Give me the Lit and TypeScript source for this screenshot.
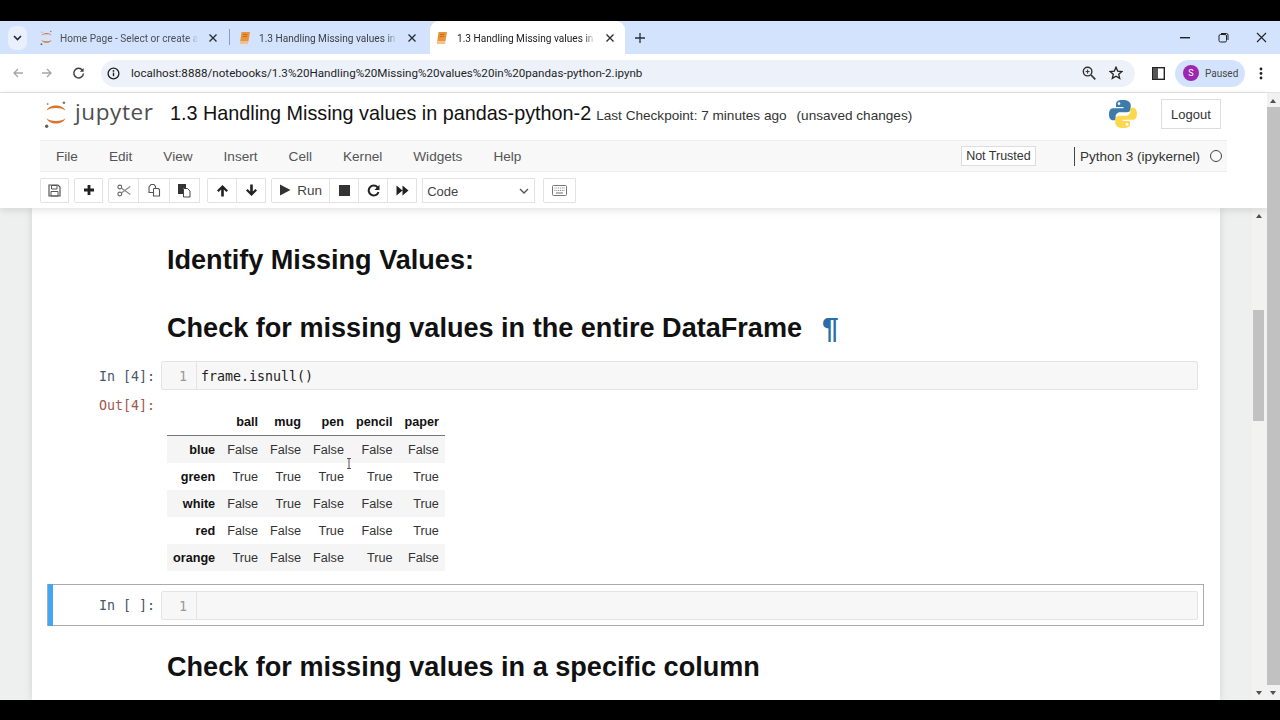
import { LitElement, html, css, svg } from "lit";
import { customElement } from "lit/decorators.js";

const book = svg`<svg width="14" height="14" viewBox="0 0 14 14"><path d="M3.5 1h8.5l-1.6 9.5H2.2z" fill="#e8953a"/><path d="M2.2 10.5h8.2l-.5 2.5H2.6c-1 0-1.3-1.2-.4-2.5z" fill="#f6c08a"/><path d="M5 3.5h4.5M4.7 5.5h4.5" stroke="#b8661a" stroke-width=".8"/></svg>`;
const jup = (s: number) => svg`<svg width="${s}" height="${s * 1.2}" viewBox="0 0 24 29"><path d="M2.5 10.5C5 3.8 19 3.8 21.5 10.5 18 7.2 6 7.2 2.5 10.5z" fill="#d8752e"/><path d="M2.5 18.5C5 25.5 19 25.5 21.5 18.5 18 22 6 22 2.5 18.5z" fill="#d8752e"/><circle cx="20" cy="2.8" r="1.3" fill="#767677"/><circle cx="2.6" cy="26.4" r="1.7" fill="#616262"/><circle cx="3.6" cy="4" r="1" fill="#989798"/></svg>`;
const x = svg`<svg width="10" height="10" viewBox="0 0 10 10"><path d="M1.5 1.5l7 7M8.5 1.5l-7 7" stroke="#2b2f36" stroke-width="1.4"/></svg>`;
const python = svg`<svg width="30" height="30" viewBox="0 0 30 30"><path d="M14.8 1C9 1 8 3 8 5.5V8h7.5v1.2H5C2.2 9.2 1 12 1 15.3c0 3.6 1.3 6 4 6h2.6v-3.5c0-2.6 2.1-4.6 4.8-4.6h6.6c2.2 0 3.7-1.7 3.7-3.8V5.5C22.2 2.8 20 1 14.8 1z" fill="#3d7bab"/><circle cx="11" cy="4.6" r="1.3" fill="#fff"/><path d="M15.2 29c5.8 0 6.8-2 6.8-4.5V22h-7.5v-1.2H25c2.8 0 4-2.8 4-6.1 0-3.6-1.3-6-4-6h-2.6v3.5c0 2.6-2.1 4.6-4.8 4.6H11c-2.2 0-3.7 1.7-3.7 3.8v3.9C7.8 27.2 10 29 15.2 29z" fill="#fcd84f"/><circle cx="19" cy="25.4" r="1.3" fill="#fff"/></svg>`;

const ic = {
  save: svg`<svg width="13" height="13" viewBox="0 0 13 13"><path d="M1 1h9l2 2v9H1z" fill="none" stroke="#555" stroke-width="1.2"/><path d="M3.5 1.5h5.5v3.5H3.5zM3 7.5h7v4.5H3z" fill="none" stroke="#555"/></svg>`,
  plus: svg`<svg width="12" height="12" viewBox="0 0 12 12"><path d="M6 1v10M1 6h10" stroke="#222" stroke-width="2.8"/></svg>`,
  cut: svg`<svg width="14" height="13" viewBox="0 0 14 13"><circle cx="2.8" cy="3" r="1.9" fill="none" stroke="#666" stroke-width="1.1"/><circle cx="2.8" cy="10" r="1.9" fill="none" stroke="#666" stroke-width="1.1"/><path d="M4.3 4l9 6.5M4.3 9l9-6.5" stroke="#888" stroke-width="1.1"/></svg>`,
  copy: svg`<svg width="14" height="14" viewBox="0 0 14 14"><path d="M4 1.5h3l1.5 2v2H11.5l1 1.2V13h-6V9.5H2V4z" fill="none" stroke="#555" stroke-width="1.1"/><path d="M6.5 9.5V5.5h2" fill="none" stroke="#555"/></svg>`,
  paste: svg`<svg width="14" height="15" viewBox="0 0 14 15"><path d="M1 1h8v4H6v6H1z" fill="#333"/><path d="M6.5 5.5h4l2.5 2.5v6H6.5z" fill="#fff" stroke="#444"/></svg>`,
  up: svg`<svg width="13" height="13" viewBox="0 0 13 13"><path d="M6.5 1L12 6.6l-1.6 1.5-2.6-2.6V12.5H5.2V5.5L2.6 8.1 1 6.6z" fill="#222"/></svg>`,
  down: svg`<svg width="13" height="13" viewBox="0 0 13 13"><path d="M6.5 12L12 6.4l-1.6-1.5-2.6 2.6V.5H5.2v7L2.6 4.9 1 6.4z" fill="#222"/></svg>`,
  play: svg`<svg width="12" height="12" viewBox="0 0 12 12"><path d="M1 .5L11.5 6 1 11.5z" fill="#333"/></svg>`,
  stop: svg`<svg width="11" height="11" viewBox="0 0 11 11"><rect width="11" height="11" fill="#333"/></svg>`,
  restart: svg`<svg width="13" height="13" viewBox="0 0 13 13"><path d="M10.6 3.4A5 5 0 1 0 11.5 8" fill="none" stroke="#222" stroke-width="2"/><path d="M12.5 .8V6H7.5z" fill="#222"/></svg>`,
  ff: svg`<svg width="13" height="11" viewBox="0 0 13 11"><path d="M.5 .5L6.5 5.5.5 10.5zM6.5 .5L12.5 5.5 6.5 10.5z" fill="#222"/></svg>`,
  kb: svg`<svg width="15" height="11" viewBox="0 0 15 11"><rect x=".5" y=".5" width="14" height="10" rx="1" fill="none" stroke="#777"/><path d="M2.5 3h10M2.5 5.5h10" stroke="#888" stroke-width="1.2" stroke-dasharray="1 .8"/><path d="M4 8h7" stroke="#888" stroke-width="1.2"/></svg>`,
};

const cols = ["ball", "mug", "pen", "pencil", "paper"];
const rows: [string, string[]][] = [
  ["blue", ["False", "False", "False", "False", "False"]],
  ["green", ["True", "True", "True", "True", "True"]],
  ["white", ["False", "True", "False", "False", "True"]],
  ["red", ["False", "False", "True", "False", "True"]],
  ["orange", ["True", "False", "False", "True", "False"]],
];

@customElement("app-root")
export class AppRoot extends LitElement {
  static styles = css`
    :host { display: flex; flex-direction: column; width: 1280px; height: 720px; background: #000; overflow: hidden; font-family: "Liberation Sans", Arial, sans-serif; color: #333; }
    .blackt { height: 21px; flex: none; background: #000; }
    .blackb { height: 20px; flex: none; background: #000; }
    .tabs { height: 33px; flex: none; background: #d3e3fd; display: flex; align-items: flex-end; font-family: Roboto, sans-serif; font-size: 10.1px; color: #3c4043; position: relative; }
    .chev { width: 19px; height: 24px; margin: 0 0 4px 8px; background: #e9f0fc; border-radius: 8px; display: flex; align-items: center; justify-content: center; flex: none; }
    .tab { height: 28px; display: flex; align-items: center; flex: none; box-sizing: border-box; margin-bottom: 2px; }
    .tab.one { width: 191px; margin-left: 11px; }
    .tab.two { width: 200px; padding-left: 7px; }
    .tab.three { width: 195px; height: 33px; margin: 0; padding: 1px 0 0 4px; background: #fff; border-radius: 9px 9px 0 0; color: #202124; }
    .tab.three .t { margin-left: 7px; }
    .tab .ico { width: 16px; display: flex; justify-content: center; flex: none; }
    .tab .t { margin-left: 6px; width: 138px; flex: none; white-space: nowrap; -webkit-mask-image: linear-gradient(90deg, #000 92%, transparent); mask-image: linear-gradient(90deg, #000 92%, transparent); }
    .tab .x { margin-left: 10px; display: flex; }
    .sep { width: 1px; height: 16px; background: #8f9bb0; margin-bottom: 9px; flex: none; }
    .plus { margin: 0 0 11px 10px; flex: none; display: flex; }
    .winc { margin-left: auto; display: flex; align-items: center; height: 33px; align-self: flex-start; }
    .winc span { width: 38px; display: flex; justify-content: center; }
    .addr { height: 39px; flex: none; background: #fff; display: flex; align-items: center; box-sizing: border-box; border-bottom: 1px solid #e3e3e3; padding-left: 12px; }
    .nav { width: 29px; display: flex; flex: none; }
    .nav.f { width: 31px; }
    .nav.rl { width: 15px; }
    .omni { margin-left: 14px; width: 1034px; height: 27px; background: #edf2fa; border-radius: 14px; display: flex; align-items: center; font-family: Roboto, sans-serif; font-size: 11.64px; color: #1f1f1f; flex: none; }
    .omni .info { margin: 0 11px 0 6px; display: flex; }
    .omni .u { flex: 1; white-space: nowrap; }
    .omni .r { display: flex; gap: 13px; margin-right: 12px; align-items: center; }
    .side { margin-left: 17px; display: flex; }
    .prof { margin-left: 10px; width: 70px; height: 27px; border-radius: 14px; background: #d3e3fd; display: flex; align-items: center; font-family: Roboto, sans-serif; font-size: 10px; color: #474747; flex: none; }
    .av { width: 16px; height: 16px; border-radius: 50%; background: #9c27b0; color: #fff; font-size: 9px; display: flex; align-items: center; justify-content: center; margin: 0 6px 0 8px; }
    .dots { margin-left: 14px; display: flex; }

    .page { flex: 1; min-height: 0; display: flex; background: #eef0f0; }
    .main { flex: 1; min-width: 0; display: flex; flex-direction: column; }
    .head { height: 115px; flex: none; background: #fff; box-shadow: 0 2px 8px rgba(0,0,0,.12); position: relative; z-index: 2; padding-left: 40px; box-sizing: border-box; width: 1267px; }
    .hd { height: 47px; width: 1187px; display: flex; align-items: center; box-sizing: border-box; padding: 0 0 6px 4px; }
    .logo { display: flex; margin-top: 1px; }
    .jt { font-family: "Open Sans", sans-serif; font-size: 22.5px; color: #4e4e4e; margin-left: 7px; letter-spacing: .6px; line-height: 1; margin-top: -2px; width: 95px; }
    .title { font-size: 19.8px; color: #111; white-space: nowrap; }
    .ck { font-size: 13.6px; color: #333; margin-left: 5px; margin-top: 3px; white-space: nowrap; }
    .ck i { font-style: normal; margin-left: 10px; }
    .py { margin-left: auto; display: flex; margin-top: 1px; }
    .logout { width: 60px; height: 30px; box-sizing: border-box; border: 1px solid #ddd; background: #fff; font-size: 13px; color: #333; display: flex; align-items: center; justify-content: center; margin: 1px 6px 0 23px; }
    .menu { height: 32px; width: 1187px; background: #f8f8f8; border-top: 1px solid #eee; border-bottom: 1px solid #eee; box-sizing: border-box; display: flex; align-items: center; font-size: 13.6px; color: #555; padding-left: 16px; }
    .menu span.m { margin-right: 31px; }
    .nt { margin-left: auto; margin-right: 38px; border: 1px solid #ddd; background: #fff; font-size: 12.5px; height: 20px; width: 75px; box-sizing: border-box; display: flex; align-items: center; justify-content: center; color: #333; }
    .kernel { border-left: 1px solid #444; height: 19px; display: flex; align-items: center; padding-left: 5px; color: #333; font-size: 13.5px; white-space: nowrap; }
    .circ { width: 12px; height: 12px; border-radius: 50%; border: 1.7px solid #444; box-sizing: border-box; margin: 0 5px 0 10px; }
    .tb { height: 36px; display: flex; align-items: center; }
    .grp { display: flex; height: 25px; margin-right: 5px; }
    .grp.wide { margin-right: 7px; }
    .btn { height: 25px; box-sizing: border-box; border: 1px solid #e2e2e2; background: #fff; display: flex; align-items: center; justify-content: center; width: 30px; margin-left: -1px; flex: none; font-size: 13.5px; color: #444; gap: 6px; }
    .grp .btn:first-child { margin-left: 0; border-radius: 2px 0 0 2px; }
    .btn.s { width: 29px; }
    .btn.c { width: 31.4px; }
    .btn.run { width: 59px; }
    .btn.k { width: 33px; }
    .sel { width: 113px; height: 25px; box-sizing: border-box; border: 1px solid #e2e2e2; background: #fff; font-size: 13px; color: #444; display: flex; align-items: center; justify-content: space-between; padding: 2px 5px 0 4px; margin: 0 8px 0 0; flex: none; }

    .body { flex: 1; min-height: 0; display: flex; overflow: hidden; }
    .gutter { flex: none; width: 32px; }
    .panel { flex: none; width: 1188px; background: #fff; box-shadow: 0 0 8px rgba(0,0,0,.12); overflow: hidden; }
    .spacer { flex: 1; }
    .iscroll { flex: none; width: 15px; background: #f2f2f0; position: relative; }
    .iscroll .th { position: absolute; top: 102px; height: 111px; left: 1px; width: 11px; background: #c1c1c1; }
    .iscroll .ua, .iscroll .da { left: 7.5px; }
    .oscroll { flex: none; width: 13px; background: #f1f1f1; position: relative; z-index: 3; }
    .oscroll .th { position: absolute; top: 14px; bottom: 15px; left: 0; right: 0; background: #c1c1c1; }
    .ua, .da { width: 0; height: 0; border-left: 3.5px solid transparent; border-right: 3.5px solid transparent; position: absolute; left: 50%; margin-left: -3.5px; }
    .ua { border-bottom: 4px solid #505050; top: 6px; }
    .da { border-top: 4px solid #505050; bottom: 5px; }

    h1 { font-size: 27.08px; font-weight: 700; color: #111; line-height: 32px; margin: 0; white-space: nowrap; }
    .h { padding-left: 135px; }
    .h1a { padding-top: 36px; }
    .h1b { padding-top: 36px; display: flex; align-items: center; }
    .pil { color: #296eaa; margin-left: 20px; font-weight: 700; font-size: 30px; line-height: 32px; }
    .row { display: flex; margin: 0 0 0 15px; width: 1157px; box-sizing: border-box; padding: 0 6px; }
    .prompt { width: 102px; margin-right: 6px; flex: none; text-align: right; font-family: "DejaVu Sans Mono", monospace; font-size: 13.3px; line-height: 31px; color: #303f9f; white-space: pre; }
    .prompt.in { color: #4a5568; }
    .prompt.out { color: #a1574f; line-height: 19px; }
    .input { flex: 1; height: 29px; box-sizing: border-box; border: 1px solid #e4e4e4; background: #f7f7f7; border-radius: 2px; display: flex; font-family: "DejaVu Sans Mono", monospace; font-size: 13.3px; line-height: 29px; color: #222; }
    .ln { width: 35px; flex: none; border-right: 1px solid #e4e4e4; text-align: right; padding-right: 9px; box-sizing: border-box; color: #999; }
    .code { padding-left: 4px; }
    .c1 { margin-top: 17px; }
    .outrow { margin-top: 4px; }
    .outtable { margin-left: 6px; padding-top: 13px; }
    table { border-collapse: collapse; border-spacing: 0; font-size: 12.65px; color: #111; }
    th, td { padding: 0 6px; text-align: right; height: 27px; white-space: nowrap; vertical-align: middle; }
    th { font-weight: 700; color: #111; }
    td { color: #333; }
    thead th { height: 26px; border-bottom: 1px solid #777; }
    tbody tr:nth-child(odd) { background: #f5f5f5; }
    .cursor { position: absolute; left: 346px; top: 458px; }
    .sel-cell { margin-top: 13px; height: 42px; border: 1px solid #ababab; position: relative; align-items: center; padding-right: 5px; }
    .sel-cell::before { content: ""; position: absolute; left: 0; top: -1px; bottom: -1px; width: 5px; background: #42a5f5; }
    .sel-cell .prompt { width: 101px; }
    .h1c { padding-top: 25px; }
  `;

  render() {
    return html`
      <div class="blackt"></div>
      <div class="tabs">
        <div class="chev"><svg width="9" height="6" viewBox="0 0 9 6"><path d="M1 1l3.5 3.5L8 1" fill="none" stroke="#1f2937" stroke-width="1.6"/></svg></div>
        <div class="tab one"><span class="ico">${jup(13)}</span><span class="t" style="color:#4a4f57">Home Page - Select or create a</span><span class="x">${x}</span></div>
        <div class="sep"></div>
        <div class="tab two"><span class="ico">${book}</span><span class="t">1.3 Handling Missing values in p</span><span class="x">${x}</span></div>
        <div class="tab three"><span class="ico">${book}</span><span class="t">1.3 Handling Missing values in p</span><span class="x">${x}</span></div>
        <div class="plus"><svg width="10" height="10" viewBox="0 0 10 10"><path d="M5 0v10M0 5h10" stroke="#2b2f36" stroke-width="1.3"/></svg></div>
        <div class="winc">
          <span><svg width="10" height="2"><rect width="10" height="1.4" fill="#222"/></svg></span>
          <span><svg width="11" height="11" viewBox="0 0 11 11"><path d="M3 1.5h5.5a1.5 1.5 0 0 1 1.5 1.5v5" fill="none" stroke="#222"/><rect x="1" y="2.5" width="7.5" height="7.5" rx="1.5" fill="none" stroke="#222"/></svg></span>
          <span><svg width="11" height="11" viewBox="0 0 11 11"><path d="M1 1l9 9M10 1l-9 9" stroke="#222" stroke-width="1.1"/></svg></span>
        </div>
      </div>
      <div class="addr">
        <span class="nav"><svg width="12" height="12" viewBox="0 0 12 12"><path d="M11 6H2M6 2L2 6l4 4" fill="none" stroke="#a3a7ac" stroke-width="1.3"/></svg></span>
        <span class="nav f"><svg width="12" height="12" viewBox="0 0 12 12"><path d="M1 6h9M6 2l4 4-4 4" fill="none" stroke="#a3a7ac" stroke-width="1.3"/></svg></span>
        <span class="nav rl"><svg width="13" height="13" viewBox="0 0 13 13"><path d="M10.4 3.2a4.8 4.8 0 1 0 1 3.3" fill="none" stroke="#3c4043" stroke-width="1.5"/><path d="M11.6 1v3.8H7.8z" fill="#3c4043"/></svg></span>
        <div class="omni">
          <span class="info"><svg width="13" height="13" viewBox="0 0 13 13"><circle cx="6.5" cy="6.5" r="5.4" fill="none" stroke="#1f1f1f" stroke-width="1.3"/><path d="M6.5 5.6v3.6" stroke="#1f1f1f" stroke-width="1.4"/><circle cx="6.5" cy="3.9" r=".9" fill="#1f1f1f"/></svg></span>
          <span class="u">localhost:8888/notebooks/1.3%20Handling%20Missing%20values%20in%20pandas-python-2.ipynb</span>
          <span class="r">
            <svg width="14" height="14" viewBox="0 0 14 14"><circle cx="5.6" cy="5.6" r="4.3" fill="none" stroke="#333" stroke-width="1.4"/><path d="M9 9l4.3 4.3" stroke="#333" stroke-width="1.7"/><path d="M3.6 5.6h4M5.6 3.6v4" stroke="#333"/></svg>
            <svg width="14" height="14" viewBox="0 0 14 14"><path d="M7 1.2l1.7 3.9 4.2.4-3.2 2.8 1 4.1L7 10.2l-3.7 2.2 1-4.1L1.1 5.5l4.2-.4z" fill="none" stroke="#222" stroke-width="1.3"/></svg>
          </span>
        </div>
        <span class="side"><svg width="13" height="13" viewBox="0 0 13 13"><rect x=".7" y=".7" width="11.6" height="11.6" fill="none" stroke="#222" stroke-width="1.4"/><rect x="1" y="1" width="5" height="11" fill="#555"/></svg></span>
        <div class="prof"><span class="av">S</span><span>Paused</span></div>
        <span class="dots"><svg width="4" height="13" viewBox="0 0 4 13"><circle cx="2" cy="2" r="1.4" fill="#222"/><circle cx="2" cy="6.5" r="1.4" fill="#222"/><circle cx="2" cy="11" r="1.4" fill="#222"/></svg></span>
      </div>
      <div class="page">
        <div class="main">
          <div class="head">
            <div class="hd">
              <span class="logo">${jup(24)}</span>
              <span class="jt">jupyter</span>
              <span class="title">1.3 Handling Missing values in pandas-python-2</span>
              <span class="ck">Last Checkpoint: 7 minutes ago<i>(unsaved changes)</i></span>
              <span class="py">${python}</span>
              <span class="logout">Logout</span>
            </div>
            <div class="menu">
              ${["File", "Edit", "View", "Insert", "Cell", "Kernel", "Widgets", "Help"].map((m) => html`<span class="m">${m}</span>`)}
              <span class="nt">Not Trusted</span>
              <span class="kernel">Python 3 (ipykernel)<span class="circ"></span></span>
            </div>
            <div class="tb">
              <div class="grp"><span class="btn s">${ic.save}</span></div>
              <div class="grp"><span class="btn s">${ic.plus}</span></div>
              <div class="grp wide"><span class="btn c">${ic.cut}</span><span class="btn c">${ic.copy}</span><span class="btn c">${ic.paste}</span></div>
              <div class="grp"><span class="btn">${ic.up}</span><span class="btn">${ic.down}</span></div>
              <div class="grp"><span class="btn run">${ic.play}Run</span><span class="btn">${ic.stop}</span><span class="btn">${ic.restart}</span><span class="btn">${ic.ff}</span></div>
              <div class="sel">Code<svg width="10" height="6" viewBox="0 0 10 6"><path d="M1 1l4 4 4-4" fill="none" stroke="#555" stroke-width="1.4"/></svg></div>
              <div class="grp"><span class="btn k">${ic.kb}</span></div>
            </div>
          </div>
          <div class="body">
            <div class="gutter"></div>
            <div class="panel">
              <div class="h h1a"><h1>Identify Missing Values:</h1></div>
              <div class="h h1b"><h1>Check for missing values in the entire DataFrame</h1><span class="pil">¶</span></div>
              <div class="row c1"><div class="prompt in">In [4]:</div><div class="input"><span class="ln">1</span><span class="code">frame.isnull()</span></div></div>
              <div class="row outrow">
                <div class="prompt out">Out[4]:</div>
                <div class="outtable">
                  <table>
                    <thead><tr><th></th>${cols.map((c) => html`<th>${c}</th>`)}</tr></thead>
                    <tbody>${rows.map(([n, v]) => html`<tr><th>${n}</th>${v.map((d) => html`<td>${d}</td>`)}</tr>`)}</tbody>
                  </table>
                </div>
              </div>
              <div class="row sel-cell"><div class="prompt in">In [ ]:</div><div class="input"><span class="ln">1</span></div></div>
              <div class="h h1c"><h1>Check for missing values in a specific column</h1></div>
            </div>
            <div class="spacer"></div>
            <div class="iscroll"><span class="ua"></span><span class="th"></span><span class="da"></span></div>
          </div>
        </div>
        <div class="oscroll"><span class="ua"></span><span class="th"></span><span class="da"></span></div>
      </div>
      <div class="blackb"></div>
      <svg class="cursor" width="6" height="11" viewBox="0 0 6 11"><path d="M1 .5h4M3 .5v10M1 10.5h4" stroke="#555" fill="none"/></svg>
    `;
  }
}
